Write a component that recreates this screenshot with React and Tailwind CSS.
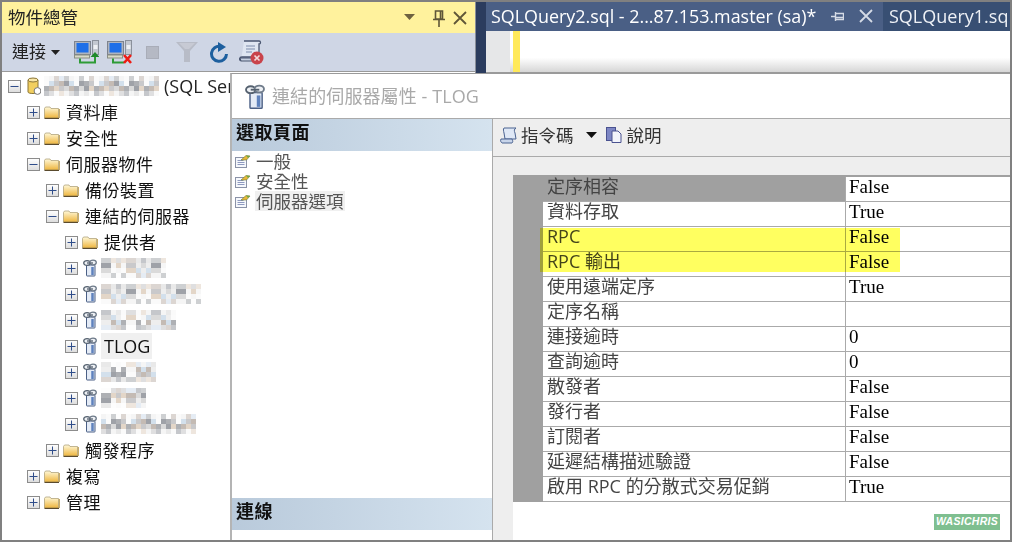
import React from "react";

const CJK = "font-['Open_Sans','Noto_Sans_CJK_TC',sans-serif]";

const ExpandBox = ({ open }) => (
  <svg width="13" height="13" viewBox="0 0 13 13" className="shrink-0">
    <defs>
      <linearGradient id="box" x1="0" y1="0" x2="0" y2="1">
        <stop offset="0" stopColor="#ffffff" />
        <stop offset="1" stopColor="#dcdcdc" />
      </linearGradient>
    </defs>
    <rect x="0.5" y="0.5" width="12" height="12" fill="url(#box)" stroke="#8c8c8c" />
    <path d={open ? "M2.5 6.5h8" : "M2.5 6.5h8M6.5 2.5v8"} stroke="#2f4d8a" strokeWidth="1" />
  </svg>
);

const FolderIcon = () => (
  <svg width="16" height="13" viewBox="0 0 16 13" className="shrink-0">
    <defs>
      <linearGradient id="fold" x1="0" y1="0" x2="0" y2="1">
        <stop offset="0" stopColor="#fff8d8" />
        <stop offset="1" stopColor="#eeb53d" />
      </linearGradient>
    </defs>
    <path d="M0.5 2.5 L1.5 1 H6 L7 2.5 H14.5 V12 H0.5 Z" fill="url(#fold)" stroke="#a89a70" strokeWidth="0.7" />
    <path d="M0.5 12.4 H15" stroke="#4a3a1a" strokeWidth="1" />
    <path d="M15.4 3 V12" stroke="#b08a30" strokeWidth="0.8" />
  </svg>
);

const LinkedIcon = ({ size = 14 }) => (
  <svg width={size} height={size * 1.25} viewBox="0 0 14 17.5" className="shrink-0">
    <rect x="3.5" y="6" width="8.500" height="11" rx="0.6" fill="#e4ebf6" stroke="#4a5f85" strokeWidth="1" />
    <path d="M9.500 8v8" stroke="#5f82bd" strokeWidth="2.500" />
    <ellipse cx="4" cy="4" rx="3.300" ry="2.400" fill="#eef1f5" stroke="#55616f" strokeWidth="1.300" />
    <ellipse cx="10" cy="3.500" rx="3.300" ry="2.400" fill="#eef1f5" stroke="#6f7b8a" strokeWidth="1.300" />
    <path d="M4 4h6" stroke="#55616f" strokeWidth="1.300" />
  </svg>
);

const PageIcon = () => (
  <svg width="16" height="14" viewBox="0 0 16 14" className="shrink-0">
    <rect x="0.5" y="3.5" width="11" height="10" fill="#f6f8fc" stroke="#8b93a8" />
    <path d="M2.5 6.5h6M2.5 8.5h7M2.5 10.5h7" stroke="#8e9ac0" />
    <path d="M6 6 L11 1.5 L15 2 L11.5 6 Z" fill="#e8b93a" stroke="#6d7a30" strokeWidth="0.6" />
    <path d="M11 1.5 L15 2 L13 4 Z" fill="#6fa84a" />
  </svg>
);

// monitor and tower shared by the connect / disconnect buttons
const ServerPc = () => (
  <>
    <rect x="0.500" y="1.500" width="16" height="13" fill="#aeb4bf" stroke="#7d838e" />
    <rect x="2.500" y="3" width="12" height="9.500" fill="#1f6fe8" />
    <rect x="0.500" y="15" width="15" height="3" fill="#d9dbc8" stroke="#8a8d84" />
    <rect x="18.500" y="0.500" width="6" height="14" fill="#c3c8d1" stroke="#8a909b" />
    <rect x="19.500" y="5" width="4" height="4" fill="#eef0f4" />
  </>
);

// pixelated blocks that stand in for the hidden server names
const TINTS = ["#c9c9cb", "#eeeeee", "#aeb0b4", "#e3d6c8", "#d3e0ec", "#9fa2a8", "#f6f6f6", "#c4bbb4", "#dadada", "#fbfbfb"];

const Mosaic = ({ cols, seed, className = "" }) => {
  const cells = [];
  for (let r = 0; r < 4; r++) {
    for (let c = 0; c < cols; c++) {
      const n = (c * 7 + r * 13 + seed * 11 + ((c * c + seed) % 5) * 3) % TINTS.length;
      const faded = r === 0 || r === 3;
      cells.push(
        <rect key={`${r}-${c}`} x={c * 5} y={r * 5} width="5" height="5" fill={TINTS[n]} opacity={faded ? 0.6 : 1} />
      );
    }
  }
  return (
    <svg width={cols * 5} height="20" className={`shrink-0 ${className}`}>
      {cells}
    </svg>
  );
};

const treeRows = [
  { level: 1, label: "資料庫" },
  { level: 1, label: "安全性" },
  { level: 1, label: "伺服器物件", open: true },
  { level: 2, label: "備份裝置" },
  { level: 2, label: "連結的伺服器", open: true },
  { level: 3, label: "提供者" },
  { level: 3, cols: 13, seed: 3 },
  { level: 3, cols: 20, seed: 8 },
  { level: 3, cols: 15, seed: 5 },
  { level: 3, label: "TLOG", selected: true },
  { level: 3, cols: 11, seed: 2 },
  { level: 3, cols: 9, seed: 6 },
  { level: 3, cols: 19, seed: 9 },
  { level: 2, label: "觸發程序" },
  { level: 1, label: "複寫" },
  { level: 1, label: "管理" },
];

const TreeRow = ({ row }) => {
  const isServer = row.level === 3 && row.label !== "提供者";
  const pad = { 1: "pl-[25px]", 2: "pl-[44px]", 3: "pl-[63px]" }[row.level];
  return (
    <div className={`h-[26px] flex items-center ${pad}`}>
      <ExpandBox open={row.open} />
      {isServer ? (
        <span className="ml-[5px] w-[18px] shrink-0">
          <LinkedIcon />
        </span>
      ) : (
        <span className="ml-[4px] w-[22px] shrink-0">
          <FolderIcon />
        </span>
      )}
      {row.cols ? (
        <Mosaic cols={row.cols} seed={row.seed} />
      ) : row.selected ? (
        <span className="h-[26px] w-[51px] pl-[3px] bg-[#f0f0f0] flex items-center text-[18px] text-[#111]">{row.label}</span>
      ) : (
        <span className="text-[17px] tracking-[0.5px] text-[#111] leading-none">{row.label}</span>
      )}
    </div>
  );
};

const ObjectExplorer = () => (
  <div className="w-[473px] shrink-0 flex flex-col">
    <div className="h-[31px] bg-[#fff29d] flex items-center pl-[6px] pr-[8px]">
      <span className="text-[17.5px] text-[#222] flex-1">物件總管</span>
      <svg width="12" height="7" viewBox="0 0 12 7"><path d="M0 0h11L5.5 6z" fill="#6e6240" /></svg>
      <svg width="14" height="18" viewBox="0 0 14 18" className="ml-[16px]">
        <path d="M3.5 2h7v8h-7zM1 10.5h12M7 11v7M8.5 2v8" fill="none" stroke="#5f5638" strokeWidth="1.6" />
      </svg>
      <svg width="14" height="14" viewBox="0 0 14 14" className="ml-[7px]">
        <path d="M1 1l12 12M13 1L1 13" stroke="#5f5638" strokeWidth="1.8" />
      </svg>
    </div>
    <div className="h-[39px] bg-[#cfd6e5] flex items-center border-b border-[#9a9a9a] pl-[10px]">
      <span className="text-[17px] text-[#222]">連接</span>
      <svg width="9" height="5" viewBox="0 0 9 5" className="ml-[5px]"><path d="M0 0h9L4.5 5z" fill="#222" /></svg>
      <svg width="25" height="24" viewBox="0 0 25 24" className="ml-[14px]">
        <ServerPc />
        <path d="M6 18.500v4h15v-6" fill="none" stroke="#2e9b36" strokeWidth="2" />
        <path d="M16.500 17h9l-4.500-5z" fill="#1e8a2a" />
      </svg>
      <svg width="25" height="24" viewBox="0 0 25 24" className="ml-[8px]">
        <ServerPc />
        <path d="M6 18.500v4h11" fill="none" stroke="#2e9b36" strokeWidth="2" />
        <path d="M17 15l7 8M24 15l-7 8" stroke="#ee1c14" strokeWidth="2.600" />
      </svg>
      <span className="ml-[14px] w-[13px] h-[13px] bg-[#b5b9c4] border border-[#a9adb8]"></span>
      <svg width="22" height="20" viewBox="0 0 22 20" className="ml-[17px]">
        <path d="M0 0h22l-8 9v11h-6V9z" fill="#b8bcc7" />
        <path d="M3 1h16l-6 6H9z" fill="#c7cad4" />
      </svg>
      <svg width="20" height="21" viewBox="0 0 20 21" className="ml-[11px]">
        <path d="M11.5 4.5A7.5 7.5 0 1 0 17.5 12" fill="none" stroke="#1d5f9e" strokeWidth="3" />
        <path d="M9 0l8 5-8 5z" fill="#1d5f9e" />
      </svg>
      <svg width="25" height="25" viewBox="0 0 25 25" className="ml-[10px]">
        <path d="M5 1h15c2 0 2 3 0 3v13H3c-3 0-3 3-1 4" fill="#dfe6f1" stroke="#4a5670" strokeWidth="1.3" />
        <path d="M7 6h9M7 9h9M7 12h6" stroke="#7d8cab" />
        <path d="M1 18h14v3H2z" fill="#c6d0e0" stroke="#4a5670" />
        <circle cx="18" cy="18" r="6.5" fill="#c9434a" />
        <path d="M15.5 15.5l5 5M20.5 15.5l-5 5" stroke="#f4d8d8" strokeWidth="1.6" />
      </svg>
    </div>
    <div className="flex-1 bg-white pt-[1px] overflow-hidden">
      <div className="h-[26px] flex items-center pl-[6px] whitespace-nowrap">
        <ExpandBox open />
        <svg width="14" height="18" viewBox="0 0 14 18" className="ml-[6px] shrink-0">
          <path d="M1 3v12c0 2 10 2 10 0V3z" fill="#f2cf5f" stroke="#8a7434" />
          <ellipse cx="6" cy="3" rx="5" ry="2" fill="#f9e7a8" stroke="#8a7434" />
          <circle cx="10.5" cy="14" r="3.4" fill="#fff" stroke="#777" />
        </svg>
        <Mosaic cols={23} seed={4} className="ml-[3px]" />
        <span className="ml-[5px] text-[18px] text-[#222]">(SQL Ser</span>
      </div>
      {treeRows.map((row, i) => (
        <TreeRow key={i} row={row} />
      ))}
    </div>
  </div>
);

const DocumentArea = () => (
  <div className="flex-1 min-w-0 flex">
    <div className="w-[11px] shrink-0 bg-[#2b3c5e] border-l border-[#8a8f9a]"></div>
    <div className="flex-1 min-w-0 flex flex-col">
      <div className="h-[29px] bg-[#4a5f85] flex items-center overflow-hidden">
        <div className="w-[397px] shrink-0 flex items-center pl-[5px]">
          <span className="text-[17.9px] text-white whitespace-nowrap w-[339px]">SQLQuery2.sql - 2...87.153.master (sa)*</span>
          <svg width="13" height="11" viewBox="0 0 13 11" className="ml-[1px]">
            <path d="M0 5.5h4M4.500 1v9M4.500 2.500h8v6h-8M4.500 6.500h8" fill="none" stroke="#d5dbe6" strokeWidth="1.4" />
          </svg>
          <svg width="14" height="14" viewBox="0 0 14 14" className="ml-[15px]">
            <path d="M1 1l12 12M13 1L1 13" stroke="#d5dbe6" strokeWidth="1.8" />
          </svg>
        </div>
        <div className="flex-1 h-full bg-[#384f73] pl-[6px] flex items-center overflow-hidden">
          <span className="text-[18px] text-[#eef1f6] whitespace-nowrap">SQLQuery1.sql</span>
        </div>
      </div>
      <div className="h-[42px] flex bg-gradient-to-b from-white from-[65%] to-[#d6d6d6] border-b border-[#9a9a9a]">
        <div className="w-[24px] bg-[#e6e7e8]"></div>
        <div className="w-[3px]"></div>
        <div className="w-[7px] bg-[#ffe95a]"></div>
      </div>
    </div>
  </div>
);

const properties = [
  ["定序相容", "False"],
  ["資料存取", "True"],
  ["RPC", "False"],
  ["RPC 輸出", "False"],
  ["使用遠端定序", "True"],
  ["定序名稱", ""],
  ["連接逾時", "0"],
  ["查詢逾時", "0"],
  ["散發者", "False"],
  ["發行者", "False"],
  ["訂閱者", "False"],
  ["延遲結構描述驗證", "False"],
  ["啟用 RPC 的分散式交易促銷", "True"],
];

const SidebarHeader = ({ children }) => (
  <div className="h-[32px] bg-gradient-to-r from-[#b9cadb] to-[#d5e3ef] flex items-center pl-[4px] pb-[5px] text-[18px] tracking-[0.5px] font-bold text-[#111]">
    {children}
  </div>
);

const pages = ["一般", "安全性", "伺服器選項"];

const PropertiesDialog = () => (
  <div className="absolute left-[228px] top-[71px] right-0 bottom-0 bg-white border-l-2 border-t border-l-[#b4b4b4] border-t-[#9a9a9a] flex flex-col">
    <div className="h-[45px] shrink-0 flex items-center border-b border-[#aaaaaa] pl-[13px]">
      <LinkedIcon size={20} />
      <span className="ml-[7px] text-[18px] tracking-[0.1px] text-[#a9a9a9]">連結的伺服器屬性 - TLOG</span>
    </div>
    <div className="flex-1 flex min-h-0">
      <div className="w-[261px] shrink-0 border-r border-[#aaaaaa] flex flex-col">
        <SidebarHeader>選取頁面</SidebarHeader>
        <div className="flex-1 pl-[3px]">
          {pages.map((page, i) => (
            <div key={page} className="h-[20px] flex items-center">
              <PageIcon />
              <span className={`ml-[4px] text-[17.5px] leading-[20px] text-[#555] px-[1px] ${i === 2 ? "bg-[#f0f0f0]" : ""}`}>{page}</span>
            </div>
          ))}
        </div>
        <SidebarHeader>連線</SidebarHeader>
        <div className="h-[10px]"></div>
      </div>
      <div className="flex-1 min-w-0 bg-[#eeeeee] flex flex-col">
        <div className="h-[38px] shrink-0 border-b border-[#aaaaaa] flex items-center pl-[7px] pb-[5px]">
          <svg width="17" height="17" viewBox="0 0 17 17">
            <path d="M4 1h12c-2 1-2 3-1 5l1 6H5L4 6C3.500 4 3 2 4 1z" fill="#dfe8f6" stroke="#4a6290" />
            <path d="M1 12h11c1 2 1 3 0 4H2c-1-1-2-2-1-4z" fill="#c8d5ea" stroke="#4a6290" />
          </svg>
          <span className="ml-[4px] text-[17.5px] text-[#333]">指令碼</span>
          <svg width="11" height="6" viewBox="0 0 11 6" className="ml-[12px]"><path d="M0 0h11L5.500 6z" fill="#111" /></svg>
          <svg width="16" height="16" viewBox="0 0 16 16" className="ml-[9px]">
            <rect x="0.500" y="0.500" width="9" height="13" fill="#7d86c4" stroke="#4a5290" />
            <path d="M6 4h6l3 3v8.500H6z" fill="#f2f4fb" stroke="#4a5290" />
          </svg>
          <span className="ml-[5px] text-[17.5px] text-[#333]">說明</span>
        </div>
        <div className="flex-1 min-h-0 pt-[18px] pl-[20px]">
          <div className="relative h-full bg-white">
            <div className="h-[2px] bg-[#a0a0a0]"></div>
            {properties.map(([name, value], i) => (
              <div key={name} className="h-[25px] flex">
                <div className="w-[30px] shrink-0 bg-[#a0a0a0]"></div>
                <div className={`w-[303px] shrink-0 border-b border-r border-[#aaaaaa] pl-[4px] pb-[6px] flex items-center text-[18px] leading-none text-[#444] whitespace-nowrap ${i === 0 ? "bg-[#a0a0a0] text-[#333]" : ""}`}>
                  {name}
                </div>
                <div className="flex-1 border-b border-[#aaaaaa] pl-[3px] pb-[6px] flex items-center font-['Liberation_Serif',serif] text-[19px] leading-none text-black">
                  {value}
                </div>
              </div>
            ))}
            <div className="absolute left-[27px] top-[53px] w-[360px] h-[44px] bg-[#ffff60] mix-blend-multiply"></div>
            <div className="absolute right-[10px] bottom-[10px] w-[66px] h-[16px] bg-[#7fbf90] flex items-center justify-center font-['Liberation_Sans',sans-serif] italic font-bold text-[10.500px] tracking-[0.3px] text-white">
              WASICHRIS
            </div>
          </div>
        </div>
      </div>
    </div>
  </div>
);

export default function App() {
  return (
    <div className={`relative w-[1012px] h-[542px] border-2 border-[#808080] flex overflow-hidden bg-white ${CJK}`}>
      <ObjectExplorer />
      <DocumentArea />
      <PropertiesDialog />
    </div>
  );
}
